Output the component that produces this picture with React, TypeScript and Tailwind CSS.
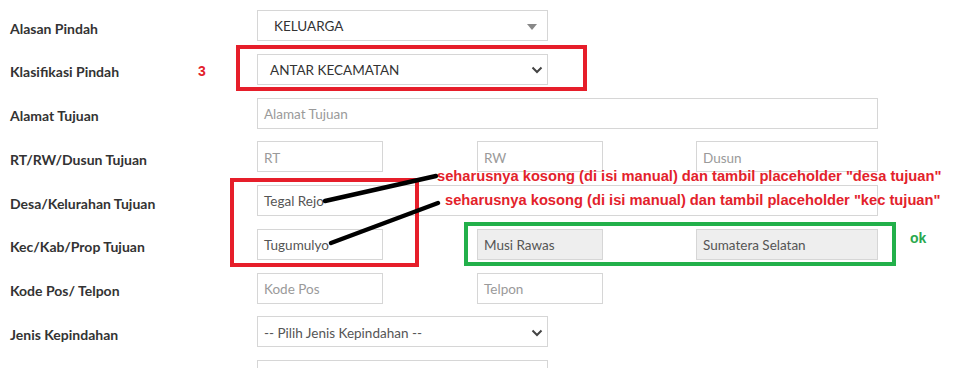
import React from "react";

const label = "text-[14px] font-bold text-[#333]";
const box = "h-[31px] border border-[#d6d6d6] px-[6px] pt-[2px] flex items-center text-[13.5px]";

function Field({ text, placeholder, w, grey }: { text?: string; placeholder?: string; w: string; grey?: boolean }) {
  return (
    <div className={`${box} ${w} ${grey ? "bg-[#eeeeee]" : "bg-white"}`}>
      {text ? <span className="text-[#555]">{text}</span> : <span className="text-[#9a9a9a]">{placeholder}</span>}
    </div>
  );
}

function Chevron() {
  return (
    <svg width="12" height="8" viewBox="0 0 12 8" className="shrink-0">
      <path d="M1.5 1.5 L6 6 L10.5 1.5" fill="none" stroke="#444" strokeWidth="2" />
    </svg>
  );
}

function Row({ name, children }: { name: string; children: React.ReactNode }) {
  return (
    <div className="flex items-center h-[31px] mb-[12.75px]">
      <div className={`w-[257px] pl-[10px] pt-[5px] ${label}`}>{name}</div>
      {children}
    </div>
  );
}

export default function App() {
  return (
    <div className="relative w-[962px] h-[368px] overflow-hidden bg-white" style={{ fontFamily: '"Lato", "Open Sans", sans-serif' }}>
      <div className="pt-[10px]">
        <Row name="Alasan Pindah">
          <div className={`${box} bg-white w-[291px] justify-between pl-[16px] pr-[10px]`}>
            <span className="text-[#333]">KELUARGA</span>
            <svg width="10" height="6" viewBox="0 0 10 6"><path d="M0 0 H10 L5 6 Z" fill="#888" /></svg>
          </div>
        </Row>
        <Row name="Klasifikasi Pindah">
          <div className={`${box} bg-white w-[291px] justify-between border-[#4d86a0] pl-[12px] pr-[4px]`}>
            <span className="text-[#333]">ANTAR KECAMATAN</span>
            <Chevron />
          </div>
        </Row>
        <Row name="Alamat Tujuan">
          <Field placeholder="Alamat Tujuan" w="w-[621px]" />
        </Row>
        <Row name="RT/RW/Dusun Tujuan">
          <div className="flex">
            <Field placeholder="RT" w="w-[126px]" />
            <Field placeholder="RW" w="w-[126px] ml-[94px]" />
            <Field placeholder="Dusun" w="w-[182px] ml-[93px]" />
          </div>
        </Row>
        <Row name="Desa/Kelurahan Tujuan">
          <Field text="Tegal Rejo" w="w-[621px]" />
        </Row>
        <Row name="Kec/Kab/Prop Tujuan">
          <div className="flex">
            <Field text="Tugumulyo" w="w-[126px]" />
            <Field text="Musi Rawas" w="w-[126px] ml-[94px]" grey />
            <Field text="Sumatera Selatan" w="w-[182px] ml-[93px]" grey />
          </div>
        </Row>
        <Row name="Kode Pos/ Telpon">
          <div className="flex">
            <Field placeholder="Kode Pos" w="w-[126px]" />
            <Field placeholder="Telpon" w="w-[126px] ml-[94px]" />
          </div>
        </Row>
        <Row name="Jenis Kepindahan">
          <div className={`${box} bg-white w-[291px] justify-between pr-[4px]`}>
            <span className="text-[#555]">-- Pilih Jenis Kepindahan --</span>
            <Chevron />
          </div>
        </Row>
        <Row name="">
          <div className={`${box} bg-white w-[291px]`} />
        </Row>
      </div>

      {/* annotations */}
      <div className="absolute left-[198px] top-[61px] text-[14px] font-bold text-[#e3222b]" style={{ fontFamily: '"Liberation Sans", sans-serif' }}>3</div>
      <div className="absolute left-[236px] top-[45px] w-[351px] h-[46px] border-[4px] border-[#e61e2a]" />
      <div className="absolute left-[230px] top-[178px] w-[189px] h-[89px] border-[4px] border-[#e61e2a]" />
      <div className="absolute left-[464px] top-[222px] w-[432px] h-[44px] border-[4px] border-[#22b04a]" />
      <div className="absolute left-[910px] top-[228px] text-[14px] font-bold text-[#2aa84e]" style={{ fontFamily: '"Liberation Sans", sans-serif' }}>ok</div>
      <svg className="absolute left-0 top-0" width="962" height="368">
        <line x1="325" y1="201" x2="436" y2="176" stroke="#000" strokeWidth="4.5" strokeLinecap="round" />
        <line x1="331" y1="243" x2="438" y2="203" stroke="#000" strokeWidth="4.5" strokeLinecap="round" />
      </svg>
      <div className="absolute left-[437px] top-[167px] text-[14.7px] font-bold text-[#e3222b] whitespace-nowrap leading-[18px]" style={{ fontFamily: '"Liberation Sans", sans-serif' }}>
        seharusnya kosong (di isi manual) dan tambil placeholder "desa tujuan"
      </div>
      <div className="absolute left-[445px] top-[191px] text-[14.7px] font-bold text-[#e3222b] whitespace-nowrap leading-[18px]" style={{ fontFamily: '"Liberation Sans", sans-serif' }}>
        seharusnya kosong (di isi manual) dan tambil placeholder "kec tujuan"
      </div>
    </div>
  );
}
